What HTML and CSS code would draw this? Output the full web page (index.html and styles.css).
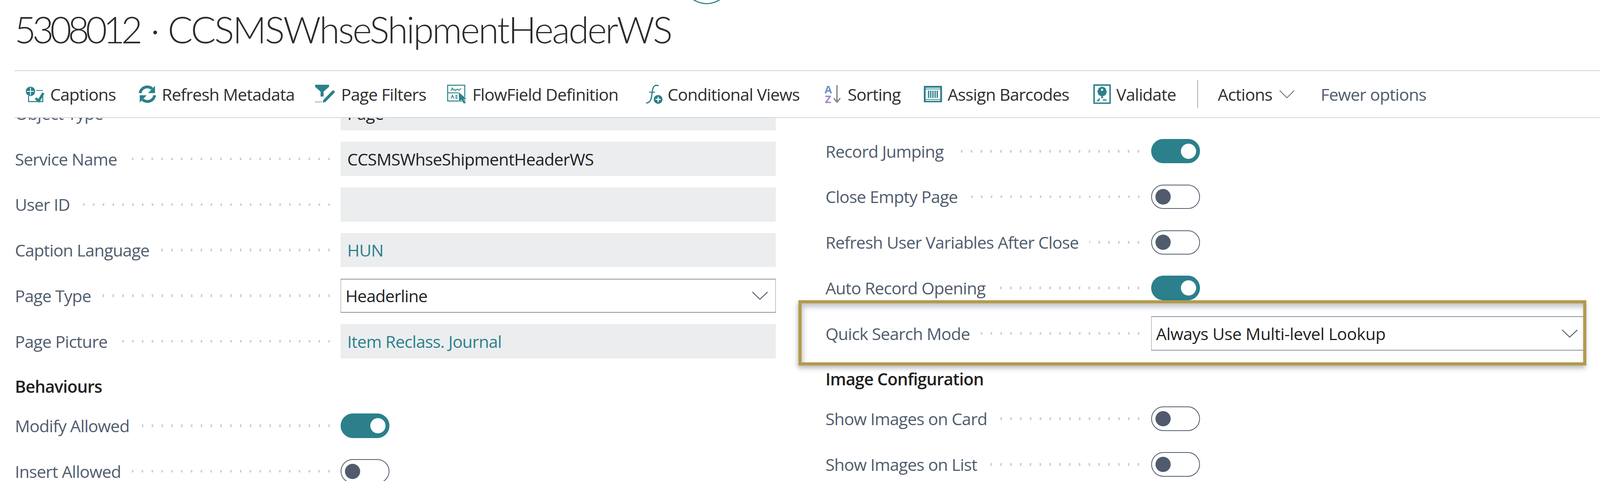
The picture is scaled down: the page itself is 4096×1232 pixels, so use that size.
FILE: index.html
```html
<!DOCTYPE html>
<html lang="en">
<head>
<meta charset="utf-8">
<title>5308012 · CCSMSWhseShipmentHeaderWS</title>
<link rel="stylesheet" href="styles.css">
</head>
<body>
<div class="page">
  <svg class="top-arc" viewBox="0 0 90 14" width="90" height="14"><path d="M6 -1 Q43 21 80 -1" fill="none" stroke="#2b808b" stroke-width="3"/></svg>
  <header class="page-head"><h1 class="title"><span class="title-id">5308012 · </span>CCSMSWhseShipmentHeaderWS</h1></header>
  <nav class="toolbar">
    <div class="tool">
      <svg class="ic" width="53" height="50" viewBox="115 50 170 150">
        <circle cx="160" cy="100" r="41" fill="#2b808b"/><path d="M160 66v68M128 100h64" stroke="#fff" stroke-width="7"/>
        <path d="M210 92h60" stroke="#2b808b" stroke-width="7"/>
        <path d="M143 140v50h125v-60" fill="none" stroke="#2b808b" stroke-width="9"/>
        <path d="M205 160l28 24 40-70" fill="none" stroke="#2b808b" stroke-width="22"/>
      </svg><span>Captions</span>
    </div>
    <div class="tool">
      <svg class="ic" width="50" height="50" viewBox="0 0 50 50">
        <path d="M5 22A20 20 0 0 1 38 10" fill="none" stroke="#2b808b" stroke-width="8"/><path d="M46 2v20H27z" fill="#2b808b"/>
        <path d="M45 28A20 20 0 0 1 12 40" fill="none" stroke="#2b808b" stroke-width="8"/><path d="M4 48V28h19z" fill="#2b808b"/>
      </svg><span>Refresh Metadata</span>
    </div>
    <div class="tool">
      <svg class="ic" width="57" height="53" viewBox="108 55 171 160">
        <path d="M110 58h115v18l-45 40v40h-25v-40l-45-40z" fill="#2b808b"/>
        <path d="M190 190l70-72" stroke="#2b808b" stroke-width="24" stroke-linecap="round"/><path d="M172 208l6-24 16 16z" fill="#2b808b"/>
        <path d="M113 201h7M127 201h7M141 201h7M155 201h7" stroke="#2b808b" stroke-width="8"/>
      </svg><span>Page Filters</span>
    </div>
    <div class="tool">
      <svg class="ic" width="55" height="53" viewBox="1198 55 165 160">
        <path d="M1204 62h142v132h-142zM1204 126h100" fill="none" stroke="#2b808b" stroke-width="8"/>
        <path d="M1232 108l10-22 10 22M1254 92l14 14 14-10 14 8 20-14M1232 172l12-26 12 26M1268 148h18M1268 160h18M1268 172h18" fill="none" stroke="#2b808b" stroke-width="7"/>
        <path d="M1294 118l68 58-25 4 20 31-20 5-18-32-21 20z" fill="#2b808b" stroke="#fff" stroke-width="3"/>
      </svg><span>FlowField Definition</span>
    </div>
    <div class="tool">
      <svg class="ic ic-tight" width="50" height="55" viewBox="125 50 150 165">
        <path d="M238 66C205 50 190 75 185 115C180 160 178 205 135 208" fill="none" stroke="#2b808b" stroke-width="10"/>
        <path d="M160 118h48" stroke="#2b808b" stroke-width="8"/>
        <circle cx="234" cy="178" r="36" fill="#2b808b"/><path d="M234 157v42M213 178h42" stroke="#fff" stroke-width="9"/>
      </svg><span>Conditional Views</span>
    </div>
    <div class="tool">
      <svg class="ic" width="48" height="52" viewBox="0 0 48 52">
        <text class="az az-a" x="0" y="24">A</text><text class="az az-z" x="1" y="50">Z</text>
        <path d="M34 1v46M25 37l9 11 9-11" fill="none" stroke="#7f8489" stroke-width="3.5"/>
      </svg><span>Sorting</span>
    </div>
    <div class="tool">
      <svg class="ic" width="50" height="46" viewBox="0 0 50 46">
        <path d="M2.5 2.5h45v41h-45z" fill="none" stroke="#2b808b" stroke-width="5"/><path d="M2 8.500h46M2 37.500h46" stroke="#2b808b" stroke-width="2"/>
        <path d="M13 13v20M19 13v20M25 13v20M31 13v20M37 13v20" stroke="#2b808b" stroke-width="3.500"/>
      </svg><span>Assign Barcodes</span>
    </div>
    <div class="tool">
      <svg class="ic" width="48" height="54" viewBox="0 0 48 54">
        <path d="M2 2h44v50H2z" fill="none" stroke="#2b808b" stroke-width="4"/>
        <path d="M24 6l9 4 4 10-3 9-10 5-10-5-3-9 4-10z" fill="#2b808b"/><path d="M24 34v4" stroke="#2b808b" stroke-width="6"/>
        <circle cx="24" cy="15" r="3" fill="#fff"/>
        <path d="M10 44l4 1 3-6M26 43h10" fill="none" stroke="#2b808b" stroke-width="3.500"/>
      </svg><span>Validate</span>
    </div>
    <div class="tool-sep"></div>
    <div class="tool"><span>Actions</span>
      <svg class="chev-s" width="42" height="24" viewBox="0 0 42 24"><path d="M1 2l20 20L41 2" fill="none" stroke="#505c6d" stroke-width="2"/></svg>
    </div>
    <div class="tool tool-muted"><span>Fewer options</span></div>
  </nav>
  <main class="content">
    <section class="col col-left">
      <div class="row"><label class="label"><span>Object Type</span><i class="leader"></i></label><div class="field"><span>Page</span></div></div>
      <div class="row"><label class="label"><span>Service Name</span><i class="leader"></i></label><div class="field"><span>CCSMSWhseShipmentHeaderWS</span></div></div>
      <div class="row"><label class="label"><span>User ID</span><i class="leader"></i></label><div class="field"></div></div>
      <div class="row"><label class="label"><span>Caption Language</span><i class="leader"></i></label><div class="field field-link"><span>HUN</span></div></div>
      <div class="row"><label class="label"><span>Page Type</span><i class="leader"></i></label><div class="select"><span>Headerline</span><svg class="chev" width="44" height="24" viewBox="0 0 44 24"><path d="M1 2l21 20L43 2" fill="none" stroke="#505c6d" stroke-width="2.500"/></svg></div></div>
      <div class="row"><label class="label"><span>Page Picture</span><i class="leader"></i></label><div class="field field-link"><span>Item Reclass. Journal</span></div></div>
      <h2 class="group group-left">Behaviours</h2>
      <div class="row"><label class="label"><span>Modify Allowed</span><i class="leader"></i></label><div class="toggle on"><b></b></div></div>
      <div class="row"><label class="label"><span>Insert Allowed</span><i class="leader"></i></label><div class="toggle"><b></b></div></div>
    </section>
    <section class="col col-right">
      <div class="row"><label class="label"><span>Record Jumping</span><i class="leader"></i></label><div class="toggle on"><b></b></div></div>
      <div class="row"><label class="label"><span>Close Empty Page</span><i class="leader"></i></label><div class="toggle"><b></b></div></div>
      <div class="row"><label class="label"><span>Refresh User Variables After Close</span><i class="leader"></i></label><div class="toggle"><b></b></div></div>
      <div class="row"><label class="label"><span>Auto Record Opening</span><i class="leader"></i></label><div class="toggle on"><b></b></div></div>
      <div class="row row-marked">
        <label class="label"><span>Quick Search Mode</span><i class="leader"></i></label>
        <div class="select select-wide"><span>Always Use Multi-level Lookup</span><svg class="chev" width="44" height="24" viewBox="0 0 44 24"><path d="M1 2l21 20L43 2" fill="none" stroke="#505c6d" stroke-width="2.500"/></svg></div>
        <div class="marker"></div>
      </div>
      <h2 class="group group-right">Image Configuration</h2>
      <div class="row"><label class="label"><span>Show Images on Card</span><i class="leader"></i></label><div class="toggle"><b></b></div></div>
      <div class="row"><label class="label"><span>Show Images on List</span><i class="leader"></i></label><div class="toggle"><b></b></div></div>
    </section>
  </main>
</div>
</body>
</html>
```
FILE: styles.css
```css
* { box-sizing: border-box; }
html, body { margin: 0; padding: 0; background: #fff; overflow: hidden; }
.page {
  zoom: 0.93091;
  position: relative;
  width: 4400px;
  height: 1323px;
  overflow: hidden;
  font-family: "Open Sans", "Noto Sans", sans-serif;
  color: #212121;
  background: #fff;
}
.top-arc { position: absolute; left: 1900px; top: 0; }
.page-head {
  height: 196px;
  margin-left: 40px;
  border-bottom: 3px solid #d3d6da;
  padding-top: 10px;
}
.title {
  margin: 0;
  font-family: "Lato", "Open Sans", sans-serif;
  font-size: 102px;
  line-height: 140px;
  font-weight: 300;
  letter-spacing: -4.100px;
  color: #2b2b2b;
}
.title-id { letter-spacing: -10.300px; word-spacing: 15px; }
.toolbar {
  height: 128px;
  margin-left: 40px;
  padding-left: 30px;
  border-bottom: 3px solid #d3d6da;
  display: grid;
  grid-template-columns: 310px 486px 363px 545px 494px 273px 466px 286px 56px 283px auto;
  align-items: center;
  font-size: 46px;
  letter-spacing: -1px;
}
.tool { display: flex; align-items: center; gap: 15px; white-space: nowrap; color: #2e2e2e; }
.tool-muted { color: #505c6d; }
.ic { flex: none; }
.ic-tight { margin-right: -3px; }
.tool-sep { width: 2px; height: 78px; background: #a9aeb5; }
.chev-s { margin-left: 4px; }
.az { font-size: 29px; font-weight: 700; font-family: "Open Sans", sans-serif; letter-spacing: 0; }
.az-a { fill: #6c8fca; }
.az-z { fill: #a184cc; }
.content {
  height: 1000px;
  overflow: hidden;
  padding-left: 41px;
  display: grid;
  grid-template-columns: 2092px 2088px;
  column-gap: 139px;
  align-items: start;
  font-size: 46px;
  letter-spacing: -1px;
}
.col { display: flex; flex-direction: column; gap: 31.4px; }
.col-left { margin-top: -59px; }
.col-right { margin-top: 45px; margin-left: -2px; }
.row { height: 94px; display: flex; align-items: center; flex: none; }
.col-left .label { width: 896px; padding-right: 30px; }
.col-right .label { width: 896px; padding-right: 33px; }
.label { display: flex; align-items: center; flex: none; color: #505c6d; white-space: nowrap; }
.leader {
  flex: 1;
  height: 7px;
  margin-left: 30px;
  background-image: linear-gradient(90deg, #c9cbce 0, #c9cbce 4px, transparent 4px);
  background-size: 27px 7px;
  background-position: right -23px center;
  background-repeat: repeat-x;
}
.field {
  flex: 1;
  height: 94px;
  background: #ebedef;
  padding-left: 18px;
  display: flex;
  align-items: center;
  color: #212121;
  letter-spacing: -.9px;
}
.field-link { color: #2b808b; }
.select {
  flex: 1;
  height: 94px;
  background: #fff;
  border: solid #8c929b;
  border-width: 3px 2px;
  padding: 0 20px 0 12px;
  display: flex;
  align-items: center;
  justify-content: space-between;
  color: #212121;
}
.select-wide { letter-spacing: -.5px; }
.toggle {
  width: 134px;
  height: 67px;
  border-radius: 34px;
  border: 3px solid #505c6d;
  background: #fff;
  padding: 0 9px;
  display: flex;
  align-items: center;
}
.toggle b { width: 42px; height: 42px; border-radius: 50%; background: #505c6d; }
.toggle.on { background: #2b808b; border-color: #2b808b; justify-content: flex-end; }
.toggle.on b { background: #fff; }
.group {
  margin: 0;
  display: flex;
  align-items: flex-end;
  font-size: 46px;
  font-weight: 600;
  color: #212121;
}
.group-left { height: 75.600px; line-height: 60px; }
.group-right { height: 78px; line-height: 62px; }
.row-marked { position: relative; }
.marker {
  position: absolute;
  left: -74px;
  right: -2px;
  top: -44px;
  bottom: -41px;
  border: 9px solid #b39b4d;
  box-shadow: -2px 7px 12px rgba(80, 86, 96, .4), inset 4px 10px 14px rgba(110, 118, 128, .42);
  pointer-events: none;
}
```
